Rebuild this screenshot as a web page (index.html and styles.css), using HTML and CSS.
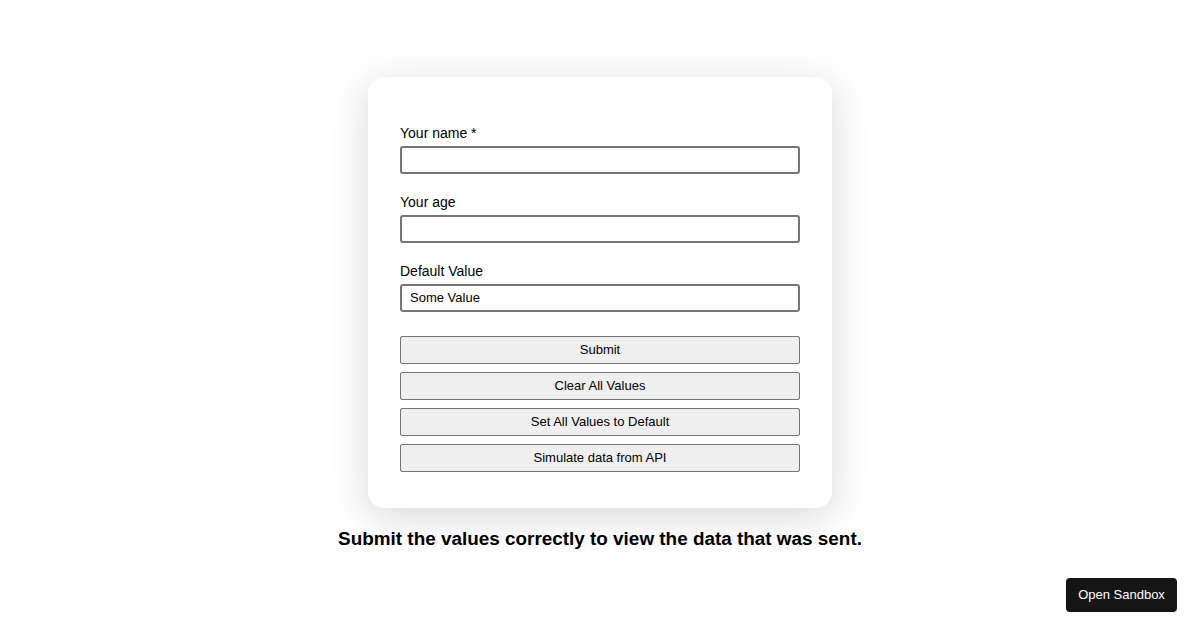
FILE: index.html
```html
<!DOCTYPE html>
<html>
<head>
<meta charset="utf-8">
<link rel="stylesheet" href="styles.css">
</head>
<body>
<main class="page">
  <form class="card">
    <div class="field">
      <label class="label">Your name *</label>
      <input class="input" type="text">
    </div>
    <div class="field">
      <label class="label">Your age</label>
      <input class="input" type="text">
    </div>
    <div class="field field-last">
      <label class="label">Default Value</label>
      <input class="input" type="text" value="Some Value">
    </div>
    <div class="actions">
      <button type="button" class="btn">Submit</button>
      <button type="button" class="btn">Clear All Values</button>
      <button type="button" class="btn">Set All Values to Default</button>
      <button type="button" class="btn">Simulate data from API</button>
    </div>
  </form>
  <h3 class="message">Submit the values correctly to view the data that was sent.</h3>
</main>
<a class="sandbox">Open Sandbox</a>
</body>
</html>
```

FILE: styles.css
```css
html, body {
  margin: 0;
  padding: 0;
  background: #ffffff;
  font-family: "Liberation Sans", Arial, sans-serif;
  color: #000;
}
.page {
  display: flex;
  flex-direction: column;
  align-items: center;
  padding-top: 77px;
}
.card {
  width: 464px;
  box-sizing: border-box;
  padding: 48px 32px 36px;
  background: #fff;
  border-radius: 16px;
  box-shadow: 0 8px 40px rgba(0, 0, 0, 0.16);
  display: flex;
  flex-direction: column;
}
.field {
  display: flex;
  flex-direction: column;
  margin-bottom: 20px;
}
.field-last {
  margin-bottom: 24px;
}
.label {
  font-size: 14px;
  line-height: 16px;
  margin-bottom: 5px;
}
.input {
  height: 28px;
  box-sizing: border-box;
  border: 2px solid #767676;
  border-radius: 3px;
  padding: 0 8px 1px;
  font-family: "Liberation Sans", Arial, sans-serif;
  font-size: 13px;
  color: #000;
  background: #fff;
  margin: 0;
}
.actions {
  display: flex;
  flex-direction: column;
  gap: 8px;
}
.btn {
  height: 28px;
  margin: 0;
  border: 1px solid #767676;
  border-radius: 2px;
  background: #efefef;
  font-family: "Liberation Sans", Arial, sans-serif;
  font-size: 13px;
  color: #000;
  padding: 0 0 2px;
}
.message {
  font-size: 18.9px;
  font-weight: bold;
  margin: 20px 0 0;
  line-height: 22px;
}
.sandbox {
  position: fixed;
  right: 23px;
  bottom: 18px;
  width: 111px;
  height: 34px;
  box-sizing: border-box;
  padding-bottom: 2px;
  display: flex;
  align-items: center;
  justify-content: center;
  background: #151515;
  color: #fff;
  border-radius: 4px;
  font-size: 13px;
}
```
